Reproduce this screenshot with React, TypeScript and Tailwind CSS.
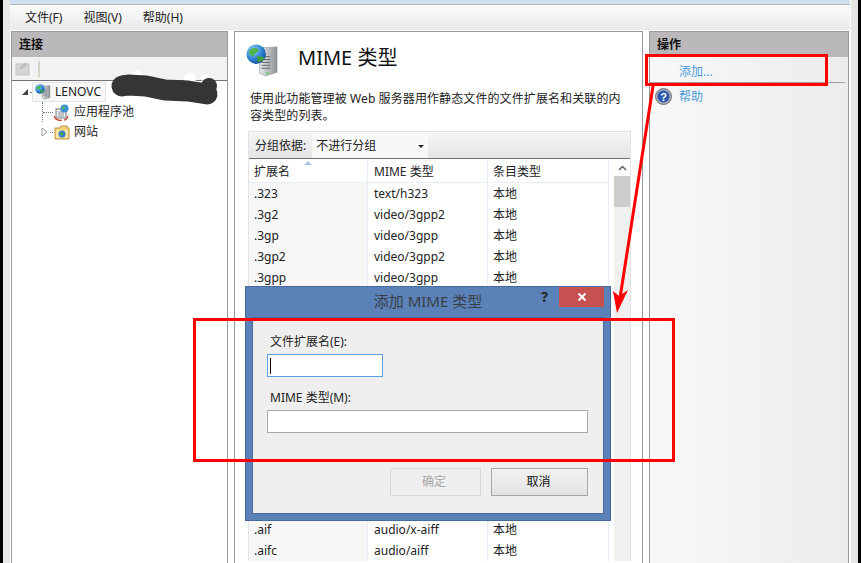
const F = '[font-family:"Noto_Sans","Noto_Sans_CJK_SC",sans-serif]';

const rows: [string, string, string][] = [
  [".323", "text/h323", "本地"],
  [".3g2", "video/3gpp2", "本地"],
  [".3gp", "video/3gpp", "本地"],
  [".3gp2", "video/3gpp2", "本地"],
  [".3gpp", "video/3gpp", "本地"],
  ...Array.from({ length: 11 }, () => ["", "", ""] as [string, string, string]),
  [".aif", "audio/x-aiff", "本地"],
  [".aifc", "audio/aiff", "本地"],
];

function ServerGlobe({ size }: { size: number }) {
  return (
    <svg width={size} height={size} viewBox="0 0 34 34" className="shrink-0">
      <defs>
        <linearGradient id="srv" x1="0" x2="1" y1="0" y2="0">
          <stop offset="0" stopColor="#e8eaec" />
          <stop offset="0.55" stopColor="#b5b9bd" />
          <stop offset="1" stopColor="#8d9195" />
        </linearGradient>
        <radialGradient id="glb" cx="0.35" cy="0.3" r="0.8">
          <stop offset="0" stopColor="#8fd0f5" />
          <stop offset="0.6" stopColor="#2a7fd0" />
          <stop offset="1" stopColor="#12458f" />
        </radialGradient>
      </defs>
      <path d="M14 4 L32 3 L32 29 L20 33 L14 30 Z" fill="url(#srv)" stroke="#8a8d91" strokeWidth="0.6" />
      <path d="M16 13h9M16 16h9M16 19h9M16 22h9M16 25h9" stroke="#60656b" strokeWidth="1" />
      <rect x="21" y="29" width="2" height="2" fill="#5fd04a" />
      <circle cx="10.5" cy="10.5" r="10" fill="url(#glb)" />
      <path d="M4 6 C8 3 12 4 13 6 C12 9 9 9 8 12 C6 13 4 11 3 10 Z" fill="#4fb54a" />
      <path d="M11 13 C15 12 18 13 19 15 C17 18 14 19 12 18 Z" fill="#3fa040" />
    </svg>
  );
}

function AppPoolIcon() {
  return (
    <svg width="17" height="17" viewBox="0 0 17 17" className="shrink-0">
      <rect x="3" y="5" width="10" height="9" fill="#f1f1f1" stroke="#70757a" />
      <path d="M5 8h6M5 10h6M5 12h6" stroke="#8a8f96" />
      <circle cx="11.5" cy="4.5" r="4" fill="#3b8fd8" />
      <path d="M9 3 C11 2 12 3 12 4 C11 6 10 5 9 5Z" fill="#5cbb50" />
      <path d="M1 12 C2 16 7 17 9 16 M15 12 C14 15 12 16 11 16" stroke="#c8402e" strokeWidth="1.2" fill="none" />
    </svg>
  );
}

function SitesIcon() {
  return (
    <svg width="16" height="15" viewBox="0 0 16 15" className="shrink-0">
      <path d="M1 3h5l1-2h6l1 2h1v11H1Z" fill="#f3d27e" stroke="#b99445" />
      <rect x="2" y="5" width="12" height="8" fill="#f8e4a6" />
      <circle cx="8" cy="9" r="3.5" fill="#2c80c9" />
      <path d="M6 7.5 C8 7 9 8 9 9 C8 11 7 10 6 10Z" fill="#58b24e" />
    </svg>
  );
}

function HelpIcon() {
  return (
    <svg width="17" height="17" viewBox="0 0 17 17" className="shrink-0">
      <circle cx="8.5" cy="8.5" r="8" fill="#a9adb5" stroke="#70757f" />
      <circle cx="8.5" cy="8.5" r="6" fill="#2d57b0" />
      <text x="8.5" y="12.5" textAnchor="middle" fontSize="11" fontWeight="700" fill="#fff" fontFamily="Liberation Sans, sans-serif">?</text>
    </svg>
  );
}

function PanelHeader({ children }: { children: string }) {
  return (
    <div className="h-[25px] bg-[#bab8ba] pl-[7px] text-[12px] leading-[26px] font-bold text-[#111]">{children}</div>
  );
}

function Row({ ext, mime, kind }: { ext: string; mime: string; kind: string }) {
  return (
    <div className="flex h-[21px] text-[12px] leading-[22px] text-[#222]">
      <div className="w-[119px] border-r border-[#e6eef8] bg-[#f7f7f7] pl-[5px]">{ext}</div>
      <div className="w-[120px] border-r border-[#e6eef8] pl-[6px]">{mime}</div>
      <div className="w-[121px] border-r border-[#e6eef8] pl-[5px]">{kind}</div>
    </div>
  );
}

export default function App() {
  return (
    <div className={`relative flex h-[563px] w-[861px] overflow-hidden bg-black ${F}`}>
      <div className="ml-[3px] w-[7px] bg-[#e8e8e8]" />
      <div className="flex w-[840px] flex-col bg-white">
        <div className="h-[4px] bg-[#cfe0f0]" />
        <div className="h-px bg-[#b4b8bc]" />
        <div className="flex h-[25px] gap-[21px] bg-gradient-to-b from-[#fbfbfb] to-[#eaeaea] pl-[15px] text-[12px] leading-[25px] text-[#222]">
          <span>文件(F)</span>
          <span>视图(V)</span>
          <span>帮助(H)</span>
        </div>
        <div className="flex min-h-0 flex-1 gap-[6px] pt-px pl-px">
          <div className="w-[217px] border border-b-0 border-[#9a9a9a]">
            <PanelHeader>连接</PanelHeader>
            <div className="flex h-[24px] items-center gap-[8px] border-b border-[#6f6f80] bg-[#f2f2f2] pl-[3px]">
              <svg width="15" height="15" viewBox="0 0 15 15">
                <rect x="1" y="3" width="13" height="11" fill="#d4d4d4" stroke="#c4c4c4" />
                <path d="M4 8 L8 3 L12 1 L11 5 L7 8Z" fill="#bdbdbd" />
              </svg>
              <div className="h-[16px] w-[2px] bg-[#d4d4c8]" />
            </div>
            <div className="pt-px text-[12px] text-[#222]">
              <div className="flex h-[20px] items-center">
                <svg width="8" height="8" viewBox="0 0 8 8" className="ml-[9px]">
                  <path d="M7 1 V7 H1 Z" fill="#404040" />
                </svg>
                <div className="ml-px w-[2px] border-t border-dotted border-[#777]" />
                <div className="flex h-[20px] w-[74px] items-center gap-[4px] border border-[#e4e4e4] bg-[#f7f7f7] pl-[2px]">
                  <ServerGlobe size={16} />
                  <span>LENOVC</span>
                </div>
              </div>
              <div className="ml-[30px] flex h-[20px] items-center border-l border-dotted border-[#777]">
                <div className="w-[10px] border-t border-dotted border-[#777]" />
                <AppPoolIcon />
                <span className="ml-[4px]">应用程序池</span>
              </div>
              <div className="flex h-[20px] items-center">
                <svg width="8" height="10" viewBox="0 0 8 10" className="ml-[29px]">
                  <path d="M1 1 L6 5 L1 9 Z" fill="#fff" stroke="#9a9a9a" />
                </svg>
                <div className="ml-px w-[3px] border-t border-dotted border-[#777]" />
                <div className="ml-px"><SitesIcon /></div>
                <span className="ml-[4px]">网站</span>
              </div>
            </div>
          </div>

          <div className="w-[409px] border border-b-0 border-[#9a9a9a] pl-[13px]">
            <div className="flex h-[53px] items-start pt-[12px]">
              <div className="-ml-[2px]"><ServerGlobe size={33} /></div>
              <span className="ml-[19px] text-[20px] leading-[27px] text-[#111]">MIME 类型</span>
            </div>
            <p className="ml-[2px] h-[46px] pt-[5px] text-[12px] leading-[17px] tracking-[0.1px] text-[#222]">
              使用此功能管理被 Web 服务器用作静态文件的文件扩展名和关联的内
              <br />
              容类型的列表。
            </p>
            <div className="w-[383px] border-x border-[#e2e2e2]">
              <div className="flex h-[28px] items-center border-y border-t-[#e2e2e2] border-b-[#6f6f80] bg-gradient-to-b from-[#f6f6f6] to-[#e4e4e4] pt-px pl-[6px] text-[12px] text-[#222]">
                <span>分组依据:</span>
                <div className="relative ml-[6px] flex h-[24px] w-[116px] items-center bg-[#f8f8f8] pl-[4px]">
                  不进行分组
                  <div className="absolute top-[11px] right-[4px] h-0 w-0 border-x-[3px] border-t-[3px] border-x-transparent border-t-[#222]" />
                </div>
              </div>
              <div className="relative flex">
                <div className="w-[360px]">
                  <div className="relative flex h-[24px] border-b border-[#e6eef8] text-[12px] leading-[25px] text-[#222]">
                    <div className="w-[119px] border-r border-[#e6eef8] pl-[5px]">扩展名</div>
                    <div className="w-[120px] border-r border-[#e6eef8] pl-[6px]">MIME 类型</div>
                    <div className="w-[121px] border-r border-[#e6eef8] pl-[5px]">条目类型</div>
                    <div className="absolute top-[2px] left-[55px] h-0 w-0 border-x-[4px] border-b-[4px] border-x-transparent border-b-[#a8c4e0]" />
                  </div>
                  {rows.map(([e, m, k], i) => (
                    <Row key={i} ext={e} mime={m} kind={k} />
                  ))}
                </div>
                <div className="ml-[5px] flex w-[17px] flex-col bg-[#f0f0f0]">
                  <div className="flex h-[17px] items-center justify-center bg-white">
                    <svg width="9" height="6" viewBox="0 0 9 6">
                      <path d="M1 5 L4.5 1.5 L8 5" fill="none" stroke="#606060" strokeWidth="1.5" />
                    </svg>
                  </div>
                  <div className="h-[31px] bg-[#cdcdcd]" />
                </div>
              </div>
            </div>
          </div>

          <div className="w-[200px] border border-b-0 border-[#9a9a9a] bg-gradient-to-r from-[#f8f8f8] to-[#ececec]">
            <PanelHeader>操作</PanelHeader>
            <div className="mr-[3px] h-[26px] border-b border-[#a0a0a0] pt-[6px] pl-[29px] text-[12px] leading-[18px] text-[#4a9ad8]">添加...</div>
            <div className="flex items-center gap-[7px] pt-[5px] pl-[5px] text-[12px] leading-[17px] text-[#4a9ad8]">
              <HelpIcon />
              <span>帮助</span>
            </div>
          </div>
        </div>
      </div>
      <div className="w-[1px] bg-white" />
      <div className="w-[7px] bg-[#e6e6e6]" />

      <div className="absolute top-[286px] left-[245px] h-[235px] w-[366px] border border-[#476a9c] bg-[#5a82b8] px-[6px] pb-[6px]">
        <div className="relative h-[30px] text-center text-[15px] leading-[28px] text-[#3a3f47]">
          添加 MIME 类型
          <span className="absolute top-[-1px] right-[56px] text-[14px] leading-[22px] font-bold text-[#222]">?</span>
          <div className="absolute top-0 right-[0px] flex h-[20px] w-[45px] items-center justify-center bg-[#c75050]">
            <svg width="10" height="10" viewBox="0 0 10 10">
              <path d="M1.5 1.5 L8.5 8.5 M8.5 1.5 L1.5 8.5" stroke="#fff" strokeWidth="2" />
            </svg>
          </div>
        </div>
        <div className="h-[197px] border border-[#476a9c] bg-[#efefef] pt-[15px] pl-[14px] text-[12px] text-[#222]">
          <div className="pl-[3px] leading-[18px]">文件扩展名(E):</div>
          <div className="mt-[3px] flex h-[23px] w-[116px] items-center border border-[#5aa0e8] bg-white pl-[2px]">
            <div className="h-[16px] w-px bg-black" />
          </div>
          <div className="mt-[12px] pl-[3px] leading-[18px]">MIME 类型(M):</div>
          <div className="mt-[3px] h-[23px] w-[321px] border border-[#a8a8a8] bg-white" />
          <div className="mt-[35px] flex gap-[10px] pl-[123px] text-center leading-[26px]">
            <div className="h-[28px] w-[91px] border border-[#d8d8d8] bg-[#efefef] pr-[3px] text-[#a8a8a8]">确定</div>
            <div className="h-[28px] w-[97px] border border-[#a8a8a8] bg-gradient-to-b from-[#f2f2f2] to-[#e3e3e3] pr-[2px] text-[#111]">取消</div>
          </div>
        </div>
      </div>

      <div className="absolute top-[54px] left-[645px] h-[32px] w-[183px] border-[3px] border-[#ff0000]" />
      <div className="absolute top-[318px] left-[193px] h-[144px] w-[482px] border-[3px] border-[#ff0000]" />
      <svg className="absolute top-0 left-0" width="861" height="563" viewBox="0 0 861 563">
        <path d="M653 86 L620 298" stroke="#ff0000" strokeWidth="3" fill="none" />
        <path d="M617 313 L613 291 L619 296 L628 290 Z" fill="#ff0000" />
        <g fill="#ffffff">
          <circle cx="137" cy="77" r="6" />
          <circle cx="190" cy="79" r="6" />
          <circle cx="205" cy="78" r="4" />
        </g>
        <path d="M122 86 L128 85 L146 86 L165 90 L188 91 L207 94" fill="none" stroke="#353535" strokeWidth="21" strokeLinecap="round" strokeLinejoin="round" />
        <g fill="#353535">
          <circle cx="125" cy="84" r="9" />
          <circle cx="148" cy="85" r="8" />
          <circle cx="209" cy="86" r="8" />
          <circle cx="207" cy="95" r="9" />
        </g>
      </svg>
    </div>
  );
}
